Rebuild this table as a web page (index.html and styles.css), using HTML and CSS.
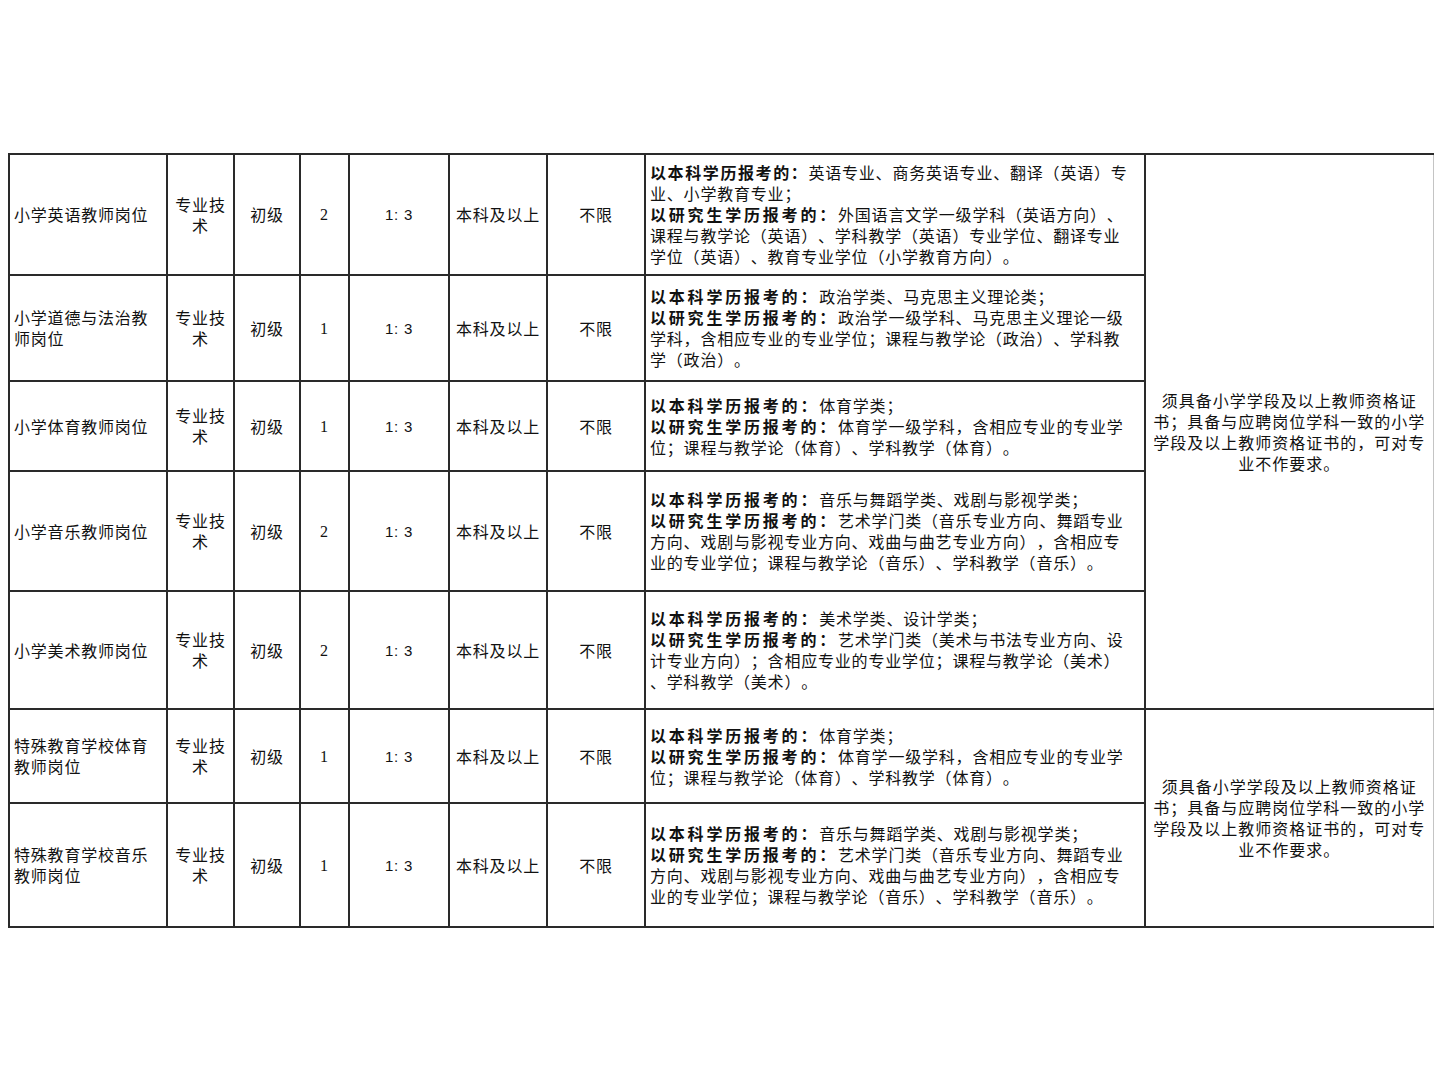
FILE: index.html
```html
<!DOCTYPE html>
<html lang="zh-CN">
<head>
<meta charset="utf-8">
<title>岗位表</title>
<link rel="stylesheet" href="styles.css">
</head>
<body>
<table class="posts">
  <colgroup>
    <col class="c-name"><col class="c-type"><col class="c-level"><col class="c-num"><col class="c-ratio"><col class="c-edu"><col class="c-age"><col class="c-req"><col class="c-cert">
  </colgroup>
  <tbody>
    <tr class="r1">
      <td class="name">小学英语教师岗位</td>
      <td class="mid">专业技术</td>
      <td class="mid">初级</td>
      <td class="mid num">2</td>
      <td class="mid ratio">1:&nbsp;3</td>
      <td class="mid">本科及以上</td>
      <td class="mid">不限</td>
      <td class="req"><b class="first">以本科学历报考的：</b>英语专业、商务英语专业、翻译（英语）专<br>业、小学教育专业；<br><b>以研究生学历报考的：</b>外国语言文学一级学科（英语方向）、<br>课程与教学论（英语）、学科教学（英语）专业学位、翻译专业<br>学位（英语）、教育专业学位（小学教育方向）。</td>
      <td class="cert" rowspan="5">须具备小学学段及以上教师资格证<br>书；具备与应聘岗位学科一致的小学<br>学段及以上教师资格证书的，可对专<br>业不作要求。</td>
    </tr>
    <tr class="r2">
      <td class="name">小学道德与法治教师岗位</td>
      <td class="mid">专业技术</td>
      <td class="mid">初级</td>
      <td class="mid num">1</td>
      <td class="mid ratio">1:&nbsp;3</td>
      <td class="mid">本科及以上</td>
      <td class="mid">不限</td>
      <td class="req"><b>以本科学历报考的：</b>政治学类、马克思主义理论类；<br><b>以研究生学历报考的：</b>政治学一级学科、马克思主义理论一级<br>学科，含相应专业的专业学位；课程与教学论（政治）、学科教<br>学（政治）。</td>
    </tr>
    <tr class="r3">
      <td class="name">小学体育教师岗位</td>
      <td class="mid">专业技术</td>
      <td class="mid">初级</td>
      <td class="mid num">1</td>
      <td class="mid ratio">1:&nbsp;3</td>
      <td class="mid">本科及以上</td>
      <td class="mid">不限</td>
      <td class="req"><b>以本科学历报考的：</b>体育学类；<br><b>以研究生学历报考的：</b>体育学一级学科，含相应专业的专业学<br>位；课程与教学论（体育）、学科教学（体育）。</td>
    </tr>
    <tr class="r4">
      <td class="name">小学音乐教师岗位</td>
      <td class="mid">专业技术</td>
      <td class="mid">初级</td>
      <td class="mid num">2</td>
      <td class="mid ratio">1:&nbsp;3</td>
      <td class="mid">本科及以上</td>
      <td class="mid">不限</td>
      <td class="req"><b>以本科学历报考的：</b>音乐与舞蹈学类、戏剧与影视学类；<br><b>以研究生学历报考的：</b>艺术学门类（音乐专业方向、舞蹈专业<br>方向、戏剧与影视专业方向、戏曲与曲艺专业方向），含相应专<br>业的专业学位；课程与教学论（音乐）、学科教学（音乐）。</td>
    </tr>
    <tr class="r5">
      <td class="name">小学美术教师岗位</td>
      <td class="mid">专业技术</td>
      <td class="mid">初级</td>
      <td class="mid num">2</td>
      <td class="mid ratio">1:&nbsp;3</td>
      <td class="mid">本科及以上</td>
      <td class="mid">不限</td>
      <td class="req"><b>以本科学历报考的：</b>美术学类、设计学类；<br><b>以研究生学历报考的：</b>艺术学门类（美术与书法专业方向、设<br>计专业方向）；含相应专业的专业学位；课程与教学论（美术）<br>、学科教学（美术）。</td>
    </tr>
    <tr class="r6">
      <td class="name">特殊教育学校体育教师岗位</td>
      <td class="mid">专业技术</td>
      <td class="mid">初级</td>
      <td class="mid num">1</td>
      <td class="mid ratio">1:&nbsp;3</td>
      <td class="mid">本科及以上</td>
      <td class="mid">不限</td>
      <td class="req"><b>以本科学历报考的：</b>体育学类；<br><b>以研究生学历报考的：</b>体育学一级学科，含相应专业的专业学<br>位；课程与教学论（体育）、学科教学（体育）。</td>
      <td class="cert" rowspan="2">须具备小学学段及以上教师资格证<br>书；具备与应聘岗位学科一致的小学<br>学段及以上教师资格证书的，可对专<br>业不作要求。</td>
    </tr>
    <tr class="r7">
      <td class="name">特殊教育学校音乐教师岗位</td>
      <td class="mid">专业技术</td>
      <td class="mid">初级</td>
      <td class="mid num">1</td>
      <td class="mid ratio">1:&nbsp;3</td>
      <td class="mid">本科及以上</td>
      <td class="mid">不限</td>
      <td class="req"><b>以本科学历报考的：</b>音乐与舞蹈学类、戏剧与影视学类；<br><b>以研究生学历报考的：</b>艺术学门类（音乐专业方向、舞蹈专业<br>方向、戏剧与影视专业方向、戏曲与曲艺专业方向），含相应专<br>业的专业学位；课程与教学论（音乐）、学科教学（音乐）。</td>
    </tr>
  </tbody>
</table>
</body>
</html>
```
FILE: styles.css
```css
html, body {
  margin: 0;
  padding: 0;
  background: #ffffff;
}

body {
  font-family: "Noto Sans CJK SC", "Liberation Sans", sans-serif;
  color: #111111;
  font-size: 16px;
  text-spacing-trim: space-all;
}

.posts {
  border-collapse: collapse;
  table-layout: fixed;
  width: 1424px;
  margin: 153px 0 0 8px;
}

.c-name { width: 158px; }
.c-type { width: 67px; }
.c-level { width: 66px; }
.c-num { width: 49px; }
.c-ratio { width: 100px; }
.c-edu { width: 98px; }
.c-age { width: 98px; }
.c-req { width: 500px; }
.c-cert { width: 288px; }

.posts td {
  border: 2px solid #2a2a2a;
  padding: 0 4px;
  vertical-align: middle;
  line-height: 21px;
  letter-spacing: 0.8px;
  overflow: hidden;
}

.r1 { height: 121px; }
.r2 { height: 106px; }
.r3 { height: 90px; }
.r4 { height: 120px; }
.r5 { height: 118px; }
.r6 { height: 94px; }
.r7 { height: 124px; }

.name {
  text-align: left;
}

.mid {
  text-align: center;
}

.num {
  font-family: "Liberation Serif", serif;
  font-size: 16px;
}

.ratio {
  font-family: "Liberation Sans", sans-serif;
  font-size: 15px;
}

.req {
  text-align: left;
  white-space: nowrap;
  letter-spacing: 1px;
  padding: 0 2px 0 3px;
}

.req b {
  font-weight: 700;
  letter-spacing: 2.8px;
}

.req b.first {
  letter-spacing: 1.6px;
}

.posts td.cert {
  text-align: center;
  white-space: nowrap;
  letter-spacing: 1px;
  border-right: 1px solid #c4c4c4;
  padding: 0 4px;
}
```
